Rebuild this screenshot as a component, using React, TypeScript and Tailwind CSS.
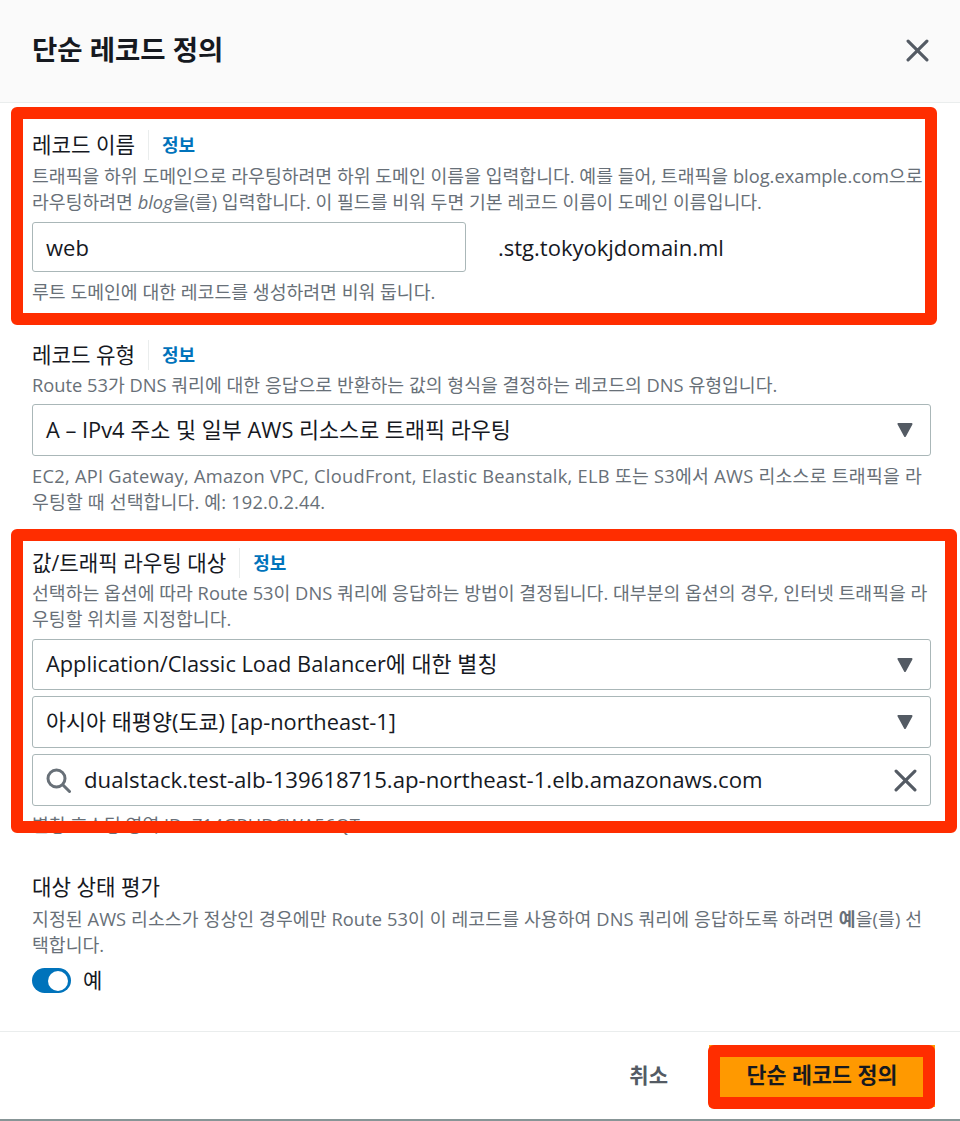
import clsx from 'clsx';

const Label = ({ text, info }: { text: string; info?: boolean }) => (
  <div className="flex items-center h-[30px]">
    <span className="text-[21.2px] leading-[30px] text-[#16191f]">{text}</span>
    {info && (
      <span className="ml-[13px] pl-[13px] border-l border-[#eaeded] text-[18px] leading-[30px] font-bold text-[#0073bb]">정보</span>
    )}
  </div>
);

const Desc = ({ children, className }: { children: React.ReactNode; className?: string }) => (
  <p className={clsx('text-[18.3px] leading-[26px] text-[#687078] whitespace-nowrap', className)}>{children}</p>
);

const Caret = () => (
  <svg width="16" height="14" viewBox="0 0 16 14" className="shrink-0">
    <path d="M1.5 1H14.5L8 13Z" fill="#545b64" stroke="#545b64" strokeWidth="2" strokeLinejoin="round" />
  </svg>
);

const Cross = ({ size, width }: { size: number; width: number }) => (
  <svg width={size} height={size} viewBox="0 0 22 22" className="shrink-0">
    <path d="M2 2L20 20M20 2L2 20" stroke="#545b64" strokeWidth={width} strokeLinecap="round" fill="none" />
  </svg>
);

const Select = ({ text, className }: { text: string; className?: string }) => (
  <div className={clsx('flex items-center justify-between pl-[13px] pr-[17px] border border-[#aab7b8] rounded-[3px] bg-white', className ?? 'h-[52px]')}>
    <span className="text-[21.8px] text-[#16191f]">{text}</span>
    <Caret />
  </div>
);

export default function App() {
  return (
    <div className="w-[960px] h-[1121px] relative overflow-hidden bg-white flex flex-col font-['Open_Sans','Noto_Sans_CJK_KR',sans-serif]">
      <header className="h-[103px] shrink-0 flex items-center justify-between pl-[32px] pr-[31px] pb-[2px] bg-[#fafafa] border-b border-[#eaeded]">
        <h1 className="text-[27.5px] font-bold text-[#16191f]">단순 레코드 정의</h1>
        <Cross size={23} width={3} />
      </header>

      <main className="flex-1 pl-[32px] pr-[29px] pt-[27px] overflow-hidden">
        <section>
          <Label text="레코드 이름" info />
          <div className="mt-[3px]">
            <Desc>트래픽을 하위 도메인으로 라우팅하려면 하위 도메인 이름을 입력합니다. 예를 들어, 트래픽을 blog.example.com으로</Desc>
            <Desc>라우팅하려면 <i>blog</i>을(를) 입력합니다. 이 필드를 비워 두면 기본 레코드 이름이 도메인 이름입니다.</Desc>
          </div>
          <div className="mt-[7px] flex items-center">
            <div className="w-[434px] h-[50px] flex items-center pl-[13px] border border-[#aab7b8] rounded-[3px] text-[22px] text-[#16191f]">web</div>
            <span className="ml-[32px] text-[22px] text-[#16191f]">.stg.tokyokjdomain.ml</span>
          </div>
          <div className="mt-[7px]">
            <Desc>루트 도메인에 대한 레코드를 생성하려면 비워 둡니다.</Desc>
          </div>
        </section>

        <section className="mt-[35px]">
          <Label text="레코드 유형" info />
          <div className="mt-[2px]">
            <Desc>Route 53가 DNS 쿼리에 대한 응답으로 반환하는 값의 형식을 결정하는 레코드의 DNS 유형입니다.</Desc>
          </div>
          <div className="mt-[6px]"><Select text="A – IPv4 주소 및 일부 AWS 리소스로 트래픽 라우팅" /></div>
          <div className="mt-[7px]">
            <Desc className="tracking-[0.26px]">EC2, API Gateway, Amazon VPC, CloudFront, Elastic Beanstalk, ELB 또는 S3에서 AWS 리소스로 트래픽을 라</Desc>
            <Desc className="tracking-[0.15px]">우팅할 때 선택합니다. 예: 192.0.2.44.</Desc>
          </div>
        </section>

        <section className="mt-[33px]">
          <Label text="값/트래픽 라우팅 대상" info />
          <div className="mt-[2px]">
            <Desc>선택하는 옵션에 따라 Route 53이 DNS 쿼리에 응답하는 방법이 결정됩니다. 대부분의 옵션의 경우, 인터넷 트래픽을 라</Desc>
            <Desc>우팅할 위치를 지정합니다.</Desc>
          </div>
          <div className="mt-[7px] flex flex-col gap-[6px]">
            <Select text="Application/Classic Load Balancer에 대한 별칭" className="h-[51px]" />
            <Select text="아시아 태평양(도쿄) [ap-northeast-1]" />
            <div className="flex items-center h-[52px] pl-[13px] pr-[13px] border border-[#aab7b8] rounded-[3px]">
              <svg width="25" height="25" viewBox="0 0 25 25" className="shrink-0">
                <circle cx="10.5" cy="10.5" r="8.5" stroke="#687078" strokeWidth="3" fill="none" />
                <path d="M17 17L23.5 23.5" stroke="#687078" strokeWidth="3" strokeLinecap="round" />
              </svg>
              <span className="ml-[13px] flex-1 text-[22.2px] text-[#16191f]">dualstack.test-alb-139618715.ap-northeast-1.elb.amazonaws.com</span>
              <Cross size={23} width={3} />
            </div>
          </div>
          <div className="mt-[6px]">
            <Desc>별칭 호스팅 영역 ID: Z14GRHDCWA56QT</Desc>
          </div>
        </section>

        <section className="mt-[34px]">
          <Label text="대상 상태 평가" />
          <div className="mt-[4px]">
            <Desc className="tracking-[0.08px]">지정된 AWS 리소스가 정상인 경우에만 Route 53이 이 레코드를 사용하여 DNS 쿼리에 응답하도록 하려면 <b>예</b>을(를) 선</Desc>
            <Desc>택합니다.</Desc>
          </div>
          <div className="mt-[7px] flex items-center gap-[12px]">
            <div className="w-[39px] h-[25px] rounded-full bg-[#0073bb] flex items-center justify-end pr-[3px]">
              <div className="w-[20px] h-[20px] rounded-full bg-white" />
            </div>
            <span className="text-[21px] text-[#16191f]">예</span>
          </div>
        </section>
      </main>

      <footer className="h-[90px] shrink-0 flex items-center justify-end pr-[25px] border-t border-[#eaeded] border-b-2 border-b-[#879596]">
        <span className="mr-[41px] text-[21px] font-bold text-[#545b64]">취소</span>
        <div className="w-[226px] h-[62px] flex items-center justify-center bg-[#ff9900] text-[21.7px] font-bold text-[#16191f]">단순 레코드 정의</div>
      </footer>

      {/* annotation boxes drawn over the screenshot */}
      <div className="absolute left-[11px] top-[107px] w-[926px] h-[218px] border-[12px] border-[#ff2d00] rounded-[6px]" />
      <div className="absolute left-[11px] top-[529px] w-[946px] h-[304px] border-[12px] border-[#ff2d00] rounded-[6px]" />
      <div className="absolute left-[708px] top-[1045px] w-[227px] h-[64px] border-[12px] border-[#ff2d00] rounded-[6px]" />
    </div>
  );
}
